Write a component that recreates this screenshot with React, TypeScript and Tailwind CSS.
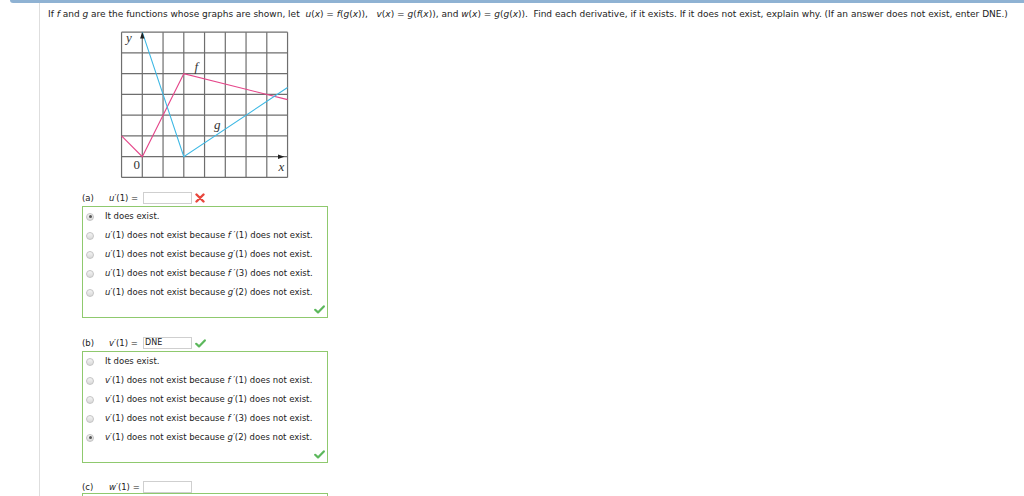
import React from "react";

const U = 20.75;
const OX = 23.3;
const OY = 126.7;
const px = (x: number) => OX + x * U;
const py = (y: number) => OY - y * U;

function Graph() {
  const vs = [-1, 0, 1, 2, 3, 4, 5, 6, 7];
  const hs = [-1, 0, 1, 2, 3, 4, 5, 6];
  const f = [[-1, 1], [0, 0], [2, 4], [7, 2.75]].map(([x, y]) => `${px(x)},${py(y)}`).join(" ");
  const g = [[0, 6], [2, 0], [7, 10 / 3]].map(([x, y]) => `${px(x)},${py(y)}`).join(" ");
  return (
    <svg width="176" height="152" viewBox="0 0 176 152" className="block">
      {vs.map((i) => (
        <line key={"v" + i} x1={px(i)} x2={px(i)} y1={py(6)} y2={py(-1)} stroke="#6e6e6e" strokeWidth="1.2" />
      ))}
      {hs.map((j) => (
        <line key={"h" + j} x1={px(-1)} x2={px(7)} y1={py(j)} y2={py(j)} stroke="#6e6e6e" strokeWidth="1.2" />
      ))}
      <polyline points={f} fill="none" stroke="#e5468a" strokeWidth="1.1" />
      <polyline points={g} fill="none" stroke="#3db8e4" strokeWidth="1.1" />
      <polygon points={`${px(0)},2 ${px(0) - 2.2},8.5 ${px(0) + 2.2},8.5`} fill="#222" />
      <polygon points={`165.5,${OY} 159,${OY - 2.3} 159,${OY + 2.3}`} fill="#222" />
      <g fontFamily="'Liberation Serif', serif" fontSize="13" fill="#333">
        <text x="7" y="11.5" fontStyle="italic">y</text>
        <text x="14.5" y="139">0</text>
        <text x="159.5" y="140.5" fontStyle="italic">x</text>
        <text x="75.5" y="41" fontStyle="italic">f</text>
        <text x="95" y="98.5" fontStyle="italic">g</text>
      </g>
    </svg>
  );
}

function RedX() {
  return (
    <svg width="10" height="10" viewBox="0 0 10 10" className="block">
      <path d="M1.5 1.5 L8.5 8.5 M8.5 1.5 L1.5 8.5" stroke="#e8473d" strokeWidth="2.4" strokeLinecap="round" />
    </svg>
  );
}

function Check() {
  return (
    <svg width="11" height="9" viewBox="0 0 11 9" className="block">
      <path d="M1.2 4.8 L4 7.4 L9.8 1.4" fill="none" stroke="#5cb85c" strokeWidth="2.2" strokeLinecap="round" strokeLinejoin="round" />
    </svg>
  );
}

function Radio({ on }: { on?: boolean }) {
  return (
    <span className="w-[8px] h-[8px] rounded-full border border-[#c4c4c4] bg-gradient-to-b from-[#f4f4f4] to-[#d9d9d9] flex items-center justify-center shrink-0">
      {on && <span className="w-[3px] h-[3px] rounded-full bg-[#555]" />}
    </span>
  );
}

function Opt({ on, children }: { on?: boolean; children: React.ReactNode }) {
  return (
    <div className="h-[19px] flex items-center pl-[3px]">
      <Radio on={on} />
      <span className="ml-[11px] whitespace-nowrap">{children}</span>
    </div>
  );
}

function Q({ label, fn, value, mark }: { label: string; fn: string; value?: string; mark?: "x" | "check" }) {
  return (
    <div className="h-[12px] flex items-center">
      <span className="w-[27px]">({label})</span>
      <span className="w-[34px] whitespace-nowrap">
        <i>{fn}</i>′(1) =
      </span>
      <span className="w-[49px] h-[12px] border border-[#cfcfcf] bg-white flex items-center pl-[1px] text-[8px] leading-none">
        {value}
      </span>
      <span className="ml-[3px]">{mark === "x" ? <RedX /> : mark === "check" ? <Check /> : null}</span>
    </div>
  );
}

function Box({ fn, sel }: { fn: string; sel: number }) {
  const rest = [
    <>
      <i>f</i> ′(1)
    </>,
    <>
      <i>g</i>′(1)
    </>,
    <>
      <i>f</i> ′(3)
    </>,
    <>
      <i>g</i>′(2)
    </>,
  ];
  return (
    <div className="w-[246px] h-[112px] border border-[#8fc96e] flex flex-col">
      <Opt on={sel === 0}>It does exist.</Opt>
      {rest.map((r, i) => (
        <Opt key={i} on={sel === i + 1}>
          <i>{fn}</i>′(1) does not exist because {r} does not exist.
        </Opt>
      ))}
      <div className="flex-1 flex items-center justify-end pr-[2px]">
        <Check />
      </div>
    </div>
  );
}

export default function App() {
  return (
    <div className="w-[1024px] h-[496px] bg-white overflow-hidden text-[#222] text-[8.5px]" style={{ fontFamily: "'DejaVu Sans', Verdana, sans-serif" }}>
      <div className="ml-[10px] h-[3px] bg-[#8fb2d3] rounded-bl-[5px]" />
      <div className="flex h-[493px]">
        <div className="w-[39px] shrink-0" />
        <div className="flex-1 border-l border-[#dedede]">
          <div className="h-[24px] pt-[5px] pl-[8px] leading-[12px] whitespace-nowrap text-[9px]">
            If <i>f</i> and <i>g</i> are the functions whose graphs are shown, let&nbsp; <i>u</i>(<i>x</i>) = <i>f</i>(<i>g</i>(<i>x</i>)),&nbsp;&nbsp; <i>v</i>(<i>x</i>) = <i>g</i>(<i>f</i>(<i>x</i>)), and <i>w</i>(<i>x</i>) = <i>g</i>(<i>g</i>(<i>x</i>)).&nbsp; Find each derivative, if it exists. If it does not exist, explain why. (If an answer does not exist, enter DNE.)
          </div>
          <div className="mt-[3px] ml-[79px]">
            <Graph />
          </div>
          <div className="ml-[42px]">
            <div className="mt-[10px]">
              <Q label="a" fn="u" mark="x" />
            </div>
            <div className="mt-[2px]">
              <Box fn="u" sel={0} />
            </div>
            <div className="mt-[19px]">
              <Q label="b" fn="v" value="DNE" mark="check" />
            </div>
            <div className="mt-[2px]">
              <Box fn="v" sel={4} />
            </div>
            <div className="mt-[18px]">
              <Q label="c" fn="w" />
            </div>
            <div className="w-[246px] h-[40px] border border-[#8fc96e]" />
          </div>
        </div>
      </div>
    </div>
  );
}
